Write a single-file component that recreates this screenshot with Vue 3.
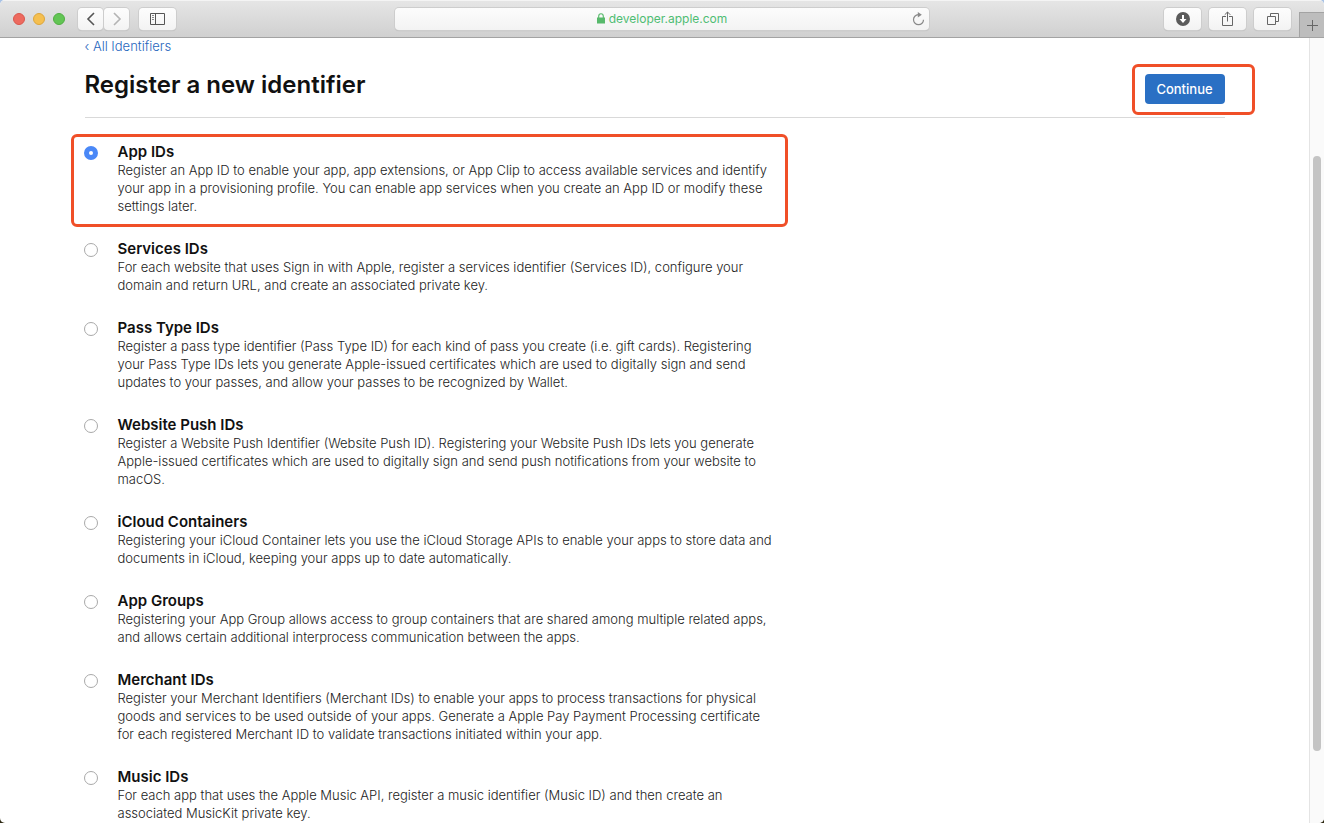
<script setup>
import { ref } from 'vue';

const selected = ref('app');

const identifiers = [
  {
    id: 'app',
    title: 'App IDs',
    text: 'Register an App ID to enable your app, app extensions, or App Clip to access available services and identify your app in a provisioning profile. You can enable app services when you create an App ID or modify these settings later.',
    highlight: true
  },
  {
    id: 'services',
    title: 'Services IDs',
    text: 'For each website that uses Sign in with Apple, register a services identifier (Services ID), configure your domain and return URL, and create an associated private key.'
  },
  {
    id: 'pass',
    title: 'Pass Type IDs',
    text: 'Register a pass type identifier (Pass Type ID) for each kind of pass you create (i.e. gift cards). Registering your Pass Type IDs lets you generate Apple-issued certificates which are used to digitally sign and send updates to your passes, and allow your passes to be recognized by Wallet.'
  },
  {
    id: 'push',
    title: 'Website Push IDs',
    text: 'Register a Website Push Identifier (Website Push ID). Registering your Website Push IDs lets you generate Apple-issued certificates which are used to digitally sign and send push notifications from your website to macOS.'
  },
  {
    id: 'icloud',
    title: 'iCloud Containers',
    text: 'Registering your iCloud Container lets you use the iCloud Storage APIs to enable your apps to store data and documents in iCloud, keeping your apps up to date automatically.'
  },
  {
    id: 'groups',
    title: 'App Groups',
    text: 'Registering your App Group allows access to group containers that are shared among multiple related apps, and allows certain additional interprocess communication between the apps.'
  },
  {
    id: 'merchant',
    title: 'Merchant IDs',
    text: 'Register your Merchant Identifiers (Merchant IDs) to enable your apps to process transactions for physical goods and services to be used outside of your apps. Generate a Apple Pay Payment Processing certificate for each registered Merchant ID to validate transactions initiated within your app.'
  },
  {
    id: 'music',
    title: 'Music IDs',
    text: 'For each app that uses the Apple Music API, register a music identifier (Music ID) and then create an associated MusicKit private key.'
  }
];
</script>

<template>
  <div class="window">
    <header class="toolbar">
      <div class="toolbar-left">
        <div class="lights">
          <span class="light red"></span>
          <span class="light yellow"></span>
          <span class="light green"></span>
        </div>
        <div class="nav-group">
          <button class="tool-btn nav-btn" aria-label="Back">
            <svg width="24" height="22" viewBox="0 0 24 22" fill="none" stroke="#555" stroke-width="1.6"><path d="M15 5L9 11l6 6" /></svg>
          </button>
          <button class="tool-btn nav-btn" aria-label="Forward">
            <svg width="24" height="22" viewBox="0 0 24 22" fill="none" stroke="#b4b4b4" stroke-width="1.6"><path d="M9 5l6 6-6 6" /></svg>
          </button>
        </div>
        <button class="tool-btn" aria-label="Sidebar">
          <svg width="15" height="12" viewBox="0 0 15 12" fill="none" stroke="#555"><path d="M.5.5h14v11H.5zM5.5.5v11" /><path d="M2 2.5h2M2 4.5h2M2 6.5h2" stroke="#888" /></svg>
        </button>
      </div>

      <div class="address">
        <span class="host">
          <svg width="8" height="11" viewBox="0 0 8 11"><path d="M1.7 5V3.2a2.3 2.4 0 0 1 4.6 0V5" fill="none" stroke="#57b96b" stroke-width="1.1" /><path d="M0 4.5h8v6H0z" fill="#57b96b" /></svg>
          developer.apple.com
        </span>
        <button class="reload" aria-label="Reload">
          <svg width="13" height="14" viewBox="0 0 13 14"><path d="M6.3 2.7A5 5 0 1 0 11.5 7.7" fill="none" stroke="#8a8a8a" stroke-width="1.2" /><path d="M5.8 0l4 2.7-4 2.8z" fill="#8a8a8a" /></svg>
        </button>
      </div>

      <div class="toolbar-right">
        <button class="tool-btn" aria-label="Downloads">
          <svg width="14" height="14" viewBox="0 0 14 14"><circle cx="7" cy="7" r="7" fill="#5a5a5a" /><path d="M7 3v5" stroke="#fff" stroke-width="2" /><path d="M3.5 7h7L7 11z" fill="#fff" /></svg>
        </button>
        <button class="tool-btn" aria-label="Share">
          <svg width="11" height="16" viewBox="0 0 11 16" fill="none" stroke="#666"><path d="M4 5.5H.5v9h10v-9H7M5.5 10.5V1M2.7 3.8L5.5 1l2.8 2.8" /></svg>
        </button>
        <button class="tool-btn" aria-label="Tabs">
          <svg width="12" height="12" viewBox="0 0 12 12" fill="none" stroke="#666"><path d="M.5 3.5h8v8h-8zM3.5 3.5v-3h8v8h-3" /></svg>
        </button>
        <button class="new-tab" aria-label="New tab">
          <svg width="11" height="11" viewBox="0 0 11 11" stroke="#666"><path d="M5.5 0v11M0 5.5h11" /></svg>
        </button>
      </div>
    </header>

    <div class="viewport">
      <main class="page">
        <div class="content">
          <a class="back-link" href="#">‹ All Identifiers</a>

          <div class="title-row">
            <h1>Register a new identifier</h1>
            <div class="continue-wrap">
              <button class="btn-continue">Continue</button>
            </div>
          </div>

          <div class="options">
            <label v-for="item in identifiers" :key="item.id" class="option" :class="{ highlight: item.highlight }">
              <input v-model="selected" type="radio" name="identifier" :value="item.id" />
              <span class="option-body">
                <strong class="option-title">{{ item.title }}</strong>
                <span class="option-text">{{ item.text }}</span>
              </span>
            </label>
          </div>
        </div>
      </main>
      <div class="scroll-track"><div class="scroll-thumb"></div></div>
    </div>
  </div>
</template>

<style>
body { margin: 0; background: linear-gradient(#a9c3e6, #2e2a14); }
</style>

<style scoped>
.window { height: 100vh; display: flex; flex-direction: column; overflow: hidden; border-radius: 5px; background: #fff; font-family: Inter, "Liberation Sans", sans-serif; color: #111; }

/* Toolbar */
.toolbar { height: 38px; flex-shrink: 0; box-sizing: border-box; display: grid; grid-template-columns: 1fr minmax(200px, 534px) 1fr; align-items: center; border-bottom: 1px solid #a3a3a3; background: linear-gradient(#e6e6e6, #d0d0d0); box-shadow: inset 0 1px #f4f4f4; }
.toolbar-left { display: flex; align-items: center; gap: 10px; padding-left: 13px; }
.lights { display: flex; gap: 8px; margin-right: 3px; }
.light { width: 12px; height: 12px; box-sizing: border-box; border-radius: 50%; border: 1px solid; }
.red { background: #ed6a5f; border-color: #d9574d; }
.yellow { background: #f5bf4f; border-color: #dca63c; }
.green { background: #62c554; border-color: #50ae42; }
.nav-group { display: flex; gap: 1px; }
.tool-btn { width: 37px; height: 22px; padding: 0; display: flex; align-items: center; justify-content: center; border: none; border-radius: 4px; background: linear-gradient(#fdfdfd, #f3f3f3); box-shadow: 0 0 0 1px #cdcdcd, 0 1px 1px #b0b0b0; }
.nav-btn { width: 25px; }

.address { height: 22px; display: flex; align-items: center; position: relative; border-radius: 4px; background: linear-gradient(#fcfcfc, #f3f3f3); box-shadow: 0 0 0 1px #cdcdcd, 0 1px 1px #b0b0b0; }
.host { flex: 1; display: flex; align-items: center; justify-content: center; gap: 4px; font-size: 12px; line-height: 22px; color: #4fbd73; }
.reload { position: absolute; right: 4px; top: 4px; display: flex; padding: 0; border: none; background: none; }

.toolbar-right { height: 100%; display: flex; align-items: center; justify-content: flex-end; gap: 8px; }
.new-tab { width: 25px; height: 25px; box-sizing: border-box; align-self: flex-end; display: flex; align-items: center; justify-content: center; padding: 0; border: 1px solid #a3a3a3; border-width: 1px 0 0 1px; background: #bdbdbd; }

/* Page */
.viewport { flex: 1; min-height: 0; display: flex; }
.page { flex: 1; min-width: 0; overflow: hidden; }
.content { max-width: 1140px; margin: 0 auto; }
.back-link { display: block; width: max-content; font-size: 13px; line-height: 16px; font-weight: 300; color: #1f66bd; text-decoration: none; }
.title-row { display: flex; align-items: center; justify-content: space-between; padding: 20px 0 13px; border-bottom: 1px solid #d9d9d9; }
h1 { margin: 0; padding-bottom: 8px; font-size: 24px; line-height: 22px; font-weight: 600; }
.continue-wrap { position: relative; }
.continue-wrap::after { content: ''; position: absolute; inset: -10px -30px -11px -13px; border: 3px solid #f04f28; border-radius: 6px; pointer-events: none; }
.btn-continue { display: block; width: 80px; height: 30px; padding: 0; border: none; border-radius: 4px; background: #2a70c4; color: #fff; font-family: inherit; font-size: 13px; line-height: 18px; font-weight: 500; }

/* Identifier list */
.options { display: flex; flex-direction: column; gap: 25px; max-width: 693px; padding-top: 25px; }
.option { position: relative; display: flex; gap: 20px; }
.option.highlight::after { content: ''; position: absolute; inset: -9px -10px -12px -14px; border: 3px solid #f04f28; border-radius: 6px; pointer-events: none; }
.option input { appearance: none; flex-shrink: 0; width: 14px; height: 14px; margin: 3px 0 0 -1px; border: 1px solid #a9a9a9; border-radius: 50%; background: #fff; }
.option input:checked { border: 5px solid #4a88f7; }
.option-title { display: block; font-size: 15px; line-height: 18px; font-weight: 600; }
.option-text { display: block; font-size: 13px; line-height: 18px; font-weight: 300; color: #222; }

/* Scrollbar */
.scroll-track { width: 15px; box-sizing: border-box; display: grid; grid-template-rows: 118fr 595fr 72fr; padding: 0 3px; border-left: 1px solid #e4e4e4; background: #fafafa; }
.scroll-thumb { grid-row: 2; border-radius: 4px; background: #c4c4c4; }
</style>
